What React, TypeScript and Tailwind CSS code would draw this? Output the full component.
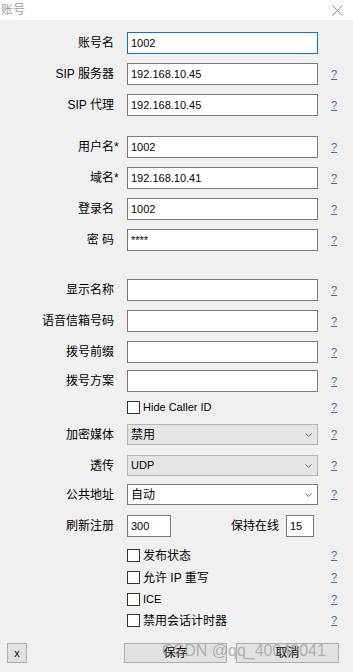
import React from 'react';

type LabelProps = { text: string; star?: boolean };

const Label: React.FC<LabelProps> = ({ text, star }) => (
  <div className="w-[114px] shrink-0 text-right text-[12px] leading-none whitespace-pre">
    {text}
    {star && <span className="-mr-[7px] inline-block w-[7px] text-left">*</span>}
  </div>
);

const Help = () => (
  <span className="ml-[13px] text-[11px] leading-none text-[#3b6db5] underline">?</span>
);

const Field: React.FC<{ value?: string; focused?: boolean }> = ({ value = '', focused }) => (
  <div
    className={`ml-[13px] flex h-[22px] w-[191px] shrink-0 items-center border bg-white pl-[3px] text-[11px] leading-none ${
      focused ? 'border-[#0078d7]' : 'border-[#7a7a7a]'
    }`}
  >
    {value}
  </div>
);

const Select: React.FC<{ value: string; disabled?: boolean; latin?: boolean }> = ({ value, disabled, latin }) => (
  <div
    className={`ml-[13px] flex h-[21px] w-[191px] shrink-0 items-center justify-between border pl-[3px] pr-[5px] leading-none ${
      latin ? 'text-[11px]' : 'text-[12px]'
    } ${disabled ? 'border-[#b4b4b4] bg-[#e5e5e5]' : 'border-[#7a7a7a] bg-white'}`}
  >
    <span>{value}</span>
    <svg width="7" height="4" viewBox="0 0 7 4">
      <path d="M0.5 0.5 L3.5 3.5 L6.5 0.5" fill="none" stroke="#707070" strokeWidth="1" />
    </svg>
  </div>
);

const Check: React.FC<{ text: string; latin?: boolean }> = ({ text, latin }) => (
  <div className="ml-[127px] flex w-[191px] items-center">
    <span className="h-[13px] w-[13px] shrink-0 border border-[#333333] bg-white" />
    <span className={`ml-[3px] leading-none ${latin ? 'text-[11px]' : 'text-[12px]'}`}>{text}</span>
  </div>
);

export default function App() {
  return (
    <div className="relative h-[672px] w-[353px] overflow-hidden bg-[#f0f0f0] font-['Liberation_Sans','Noto_Sans_CJK_SC',sans-serif] text-black">
      {/* title bar */}
      <div className="flex h-[20px] items-center justify-between bg-white pr-[10px]">
        <span className="pl-[1px] text-[12px] leading-none text-[#a0a0a0]">账号</span>
        <svg width="11" height="11" viewBox="0 0 11 11">
          <path d="M0.5 0.5 L10.5 10.5 M10.5 0.5 L0.5 10.5" stroke="#8a8a8a" strokeWidth="1" />
        </svg>
      </div>

      <div className="flex flex-col pt-[12px]">
        <div className="flex h-[22px] items-center">
          <Label text="账号名" />
          <Field value="1002" focused />
        </div>
        <div className="mt-[9px] flex h-[22px] items-center">
          <Label text="SIP 服务器" />
          <Field value="192.168.10.45" />
          <Help />
        </div>
        <div className="mt-[9px] flex h-[22px] items-center">
          <Label text="SIP 代理" />
          <Field value="192.168.10.45" />
          <Help />
        </div>

        <div className="mt-[20px] flex h-[22px] items-center">
          <Label text="用户名" star />
          <Field value="1002" />
          <Help />
        </div>
        <div className="mt-[9px] flex h-[22px] items-center">
          <Label text="域名" star />
          <Field value="192.168.10.41" />
          <Help />
        </div>
        <div className="mt-[9px] flex h-[22px] items-center">
          <Label text="登录名" />
          <Field value="1002" />
          <Help />
        </div>
        <div className="mt-[9px] flex h-[22px] items-center">
          <Label text="密 码" />
          <Field value="****" />
          <Help />
        </div>

        <div className="mt-[28px] flex h-[22px] items-center">
          <Label text="显示名称" />
          <Field />
          <Help />
        </div>
        <div className="mt-[9px] flex h-[22px] items-center">
          <Label text="语音信箱号码" />
          <Field />
          <Help />
        </div>
        <div className="mt-[9px] flex h-[22px] items-center">
          <Label text="拨号前缀" />
          <Field />
          <Help />
        </div>
        <div className="mt-[7px] flex h-[22px] items-center">
          <Label text="拨号方案" />
          <Field />
          <Help />
        </div>

        <div className="mt-[9px] flex h-[13px] items-center">
          <Check text="Hide Caller ID" latin />
          <Help />
        </div>

        <div className="mt-[10px] flex h-[21px] items-center">
          <Label text="加密媒体" />
          <Select value="禁用" disabled />
          <Help />
        </div>
        <div className="mt-[10px] flex h-[21px] items-center">
          <Label text="透传" />
          <Select value="UDP" disabled latin />
          <Help />
        </div>
        <div className="mt-[8px] flex h-[21px] items-center">
          <Label text="公共地址" />
          <Select value="自动" />
          <Help />
        </div>

        <div className="mt-[10px] flex h-[22px] items-center">
          <Label text="刷新注册" />
          <div className="ml-[13px] flex h-[22px] w-[44px] items-center border border-[#7a7a7a] bg-white pl-[3px] text-[11px] leading-none">
            300
          </div>
          <div className="w-[108px] text-right text-[12px] leading-none">保持在线</div>
          <div className="ml-[7px] flex h-[22px] w-[28px] items-center border border-[#7a7a7a] bg-white pl-[3px] text-[11px] leading-none">
            15
          </div>
        </div>

        <div className="mt-[12px] flex h-[13px] items-center">
          <Check text="发布状态" />
          <Help />
        </div>
        <div className="mt-[9px] flex h-[13px] items-center">
          <Check text="允许 IP 重写" />
          <Help />
        </div>
        <div className="mt-[9px] flex h-[13px] items-center">
          <Check text="ICE" latin />
          <Help />
        </div>
        <div className="mt-[8px] flex h-[13px] items-center">
          <Check text="禁用会话计时器" />
          <Help />
        </div>

        <div className="mt-[16px] flex h-[20px] items-center">
          <button className="ml-[7px] flex h-[20px] w-[20px] items-center justify-center border border-[#adadad] bg-[#e1e1e1] text-[11px] leading-none">
            x
          </button>
          <button className="ml-[97px] flex h-[20px] w-[103px] items-center justify-center border border-[#adadad] bg-[#e1e1e1] text-[12px] leading-none">
            保存
          </button>
          <button className="ml-[9px] flex h-[20px] w-[103px] items-center justify-center border border-[#adadad] bg-[#e1e1e1] text-[12px] leading-none">
            取消
          </button>
        </div>
      </div>

      {/* watermark */}
      <div className="pointer-events-none absolute left-[162px] top-[643px] text-[16px] leading-none text-[rgba(130,130,130,0.55)]">
        CSDN @qq_40040041
      </div>
    </div>
  );
}
